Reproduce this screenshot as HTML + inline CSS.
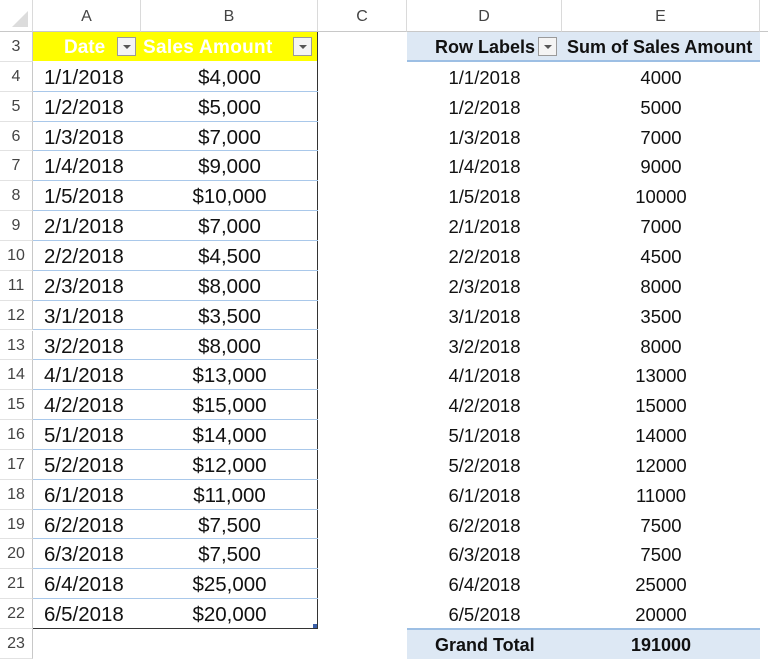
<!DOCTYPE html>
<html><head><meta charset="utf-8"><style>
*{margin:0;padding:0;box-sizing:border-box}
body{width:768px;height:662px;background:#fff;position:relative;overflow:hidden;font-family:"Liberation Sans",sans-serif;color:#111}
.ch{position:absolute;top:0;height:32px;border-right:1px solid #dadada;border-bottom:1px solid #c8c8c8;text-align:center;line-height:34px;font-size:16px;color:#444;background:#fff}
.rn{position:absolute;left:0;width:33px;height:29.85px;border-right:1px solid #c8c8c8;border-bottom:1px solid #e2e2e2;text-align:center;font-size:16px;color:#444;line-height:30px}
.r{position:absolute;height:29.85px;font-size:20.5px;line-height:31px;white-space:nowrap}
.ta{left:33px;width:285px;border-bottom:1px solid #a9c8ea}
.a{position:absolute;left:11px}
.b{position:absolute;left:108px;width:177px;text-align:center}
.pv{left:407px;width:353px;font-size:18.5px}
.d{position:absolute;left:0;width:155px;text-align:center}
.e{position:absolute;left:155px;width:198px;text-align:center}
.dd{display:inline-block;width:19px;height:19px;border:1px solid #9a9a9a;background:#f4f4f4;vertical-align:middle;position:relative}
.dd:after{content:"";position:absolute;left:5px;top:7px;border-left:4px solid transparent;border-right:4px solid transparent;border-top:4px solid #555}
</style></head><body>
<div class="ch" style="left:0;width:33px;background:#fff"><div style="position:absolute;right:4px;bottom:4px;border-left:16px solid transparent;border-bottom:16px solid #dcdcdc"></div></div>
<div class="ch" style="left:33px;width:108px">A</div>
<div class="ch" style="left:141px;width:177px">B</div>
<div class="ch" style="left:318px;width:89px">C</div>
<div class="ch" style="left:407px;width:155px">D</div>
<div class="ch" style="left:562px;width:198px">E</div>
<div class="ch" style="left:760px;width:8px;border-right:none"></div>

<div class="rn" style="top:32px">3</div><div class="rn" style="top:61.85px">4</div><div class="rn" style="top:91.7px">5</div><div class="rn" style="top:121.55px">6</div><div class="rn" style="top:151.4px">7</div><div class="rn" style="top:181.25px">8</div><div class="rn" style="top:211.1px">9</div><div class="rn" style="top:240.95px">10</div><div class="rn" style="top:270.8px">11</div><div class="rn" style="top:300.65px">12</div><div class="rn" style="top:330.5px">13</div><div class="rn" style="top:360.35px">14</div><div class="rn" style="top:390.2px">15</div><div class="rn" style="top:420.05px">16</div><div class="rn" style="top:449.9px">17</div><div class="rn" style="top:479.75px">18</div><div class="rn" style="top:509.6px">19</div><div class="rn" style="top:539.45px">20</div><div class="rn" style="top:569.3px">21</div><div class="rn" style="top:599.15px">22</div><div class="rn" style="top:629px">23</div>

<div class="r" style="left:33px;top:32px;width:285px;height:29px;background:#ffff00;color:#fff;font-weight:bold;font-size:19px;line-height:31px">
<span style="position:absolute;left:31px">Date</span><span class="dd" style="position:absolute;left:84px;top:5px"></span>
<span style="position:absolute;left:110px;letter-spacing:0.3px">Sales Amount</span><span class="dd" style="position:absolute;left:260px;top:5px"></span></div>
<div style="position:absolute;left:317px;top:32px;width:1px;height:597px;background:#333"></div>
<div style="position:absolute;left:33px;top:628px;width:285px;height:1px;background:#333"></div>
<div style="position:absolute;left:313px;top:624px;width:4px;height:4px;background:#3a5fa8"></div>

<div class="r ta" style="top:61.85px"><span class="a">1/1/2018</span><span class="b">$4,000</span></div>
<div class="r ta" style="top:91.7px"><span class="a">1/2/2018</span><span class="b">$5,000</span></div>
<div class="r ta" style="top:121.55px"><span class="a">1/3/2018</span><span class="b">$7,000</span></div>
<div class="r ta" style="top:151.4px"><span class="a">1/4/2018</span><span class="b">$9,000</span></div>
<div class="r ta" style="top:181.25px"><span class="a">1/5/2018</span><span class="b">$10,000</span></div>
<div class="r ta" style="top:211.1px"><span class="a">2/1/2018</span><span class="b">$7,000</span></div>
<div class="r ta" style="top:240.95px"><span class="a">2/2/2018</span><span class="b">$4,500</span></div>
<div class="r ta" style="top:270.8px"><span class="a">2/3/2018</span><span class="b">$8,000</span></div>
<div class="r ta" style="top:300.65px"><span class="a">3/1/2018</span><span class="b">$3,500</span></div>
<div class="r ta" style="top:330.5px"><span class="a">3/2/2018</span><span class="b">$8,000</span></div>
<div class="r ta" style="top:360.35px"><span class="a">4/1/2018</span><span class="b">$13,000</span></div>
<div class="r ta" style="top:390.2px"><span class="a">4/2/2018</span><span class="b">$15,000</span></div>
<div class="r ta" style="top:420.05px"><span class="a">5/1/2018</span><span class="b">$14,000</span></div>
<div class="r ta" style="top:449.9px"><span class="a">5/2/2018</span><span class="b">$12,000</span></div>
<div class="r ta" style="top:479.75px"><span class="a">6/1/2018</span><span class="b">$11,000</span></div>
<div class="r ta" style="top:509.6px"><span class="a">6/2/2018</span><span class="b">$7,500</span></div>
<div class="r ta" style="top:539.45px"><span class="a">6/3/2018</span><span class="b">$7,500</span></div>
<div class="r ta" style="top:569.3px"><span class="a">6/4/2018</span><span class="b">$25,000</span></div>
<div class="r ta" style="top:599.15px;border-bottom:none"><span class="a">6/5/2018</span><span class="b">$20,000</span></div>

<div class="r pv" style="top:32px;height:30px;background:#dde8f4;border-bottom:2px solid #9dbfe4;font-weight:bold;font-size:18px">
<span style="position:absolute;left:28px">Row Labels</span><span class="dd" style="position:absolute;left:131px;top:5px"></span>
<span style="position:absolute;left:160px">Sum of Sales Amount</span></div>
<div class="r pv" style="top:61.85px"><span class="d">1/1/2018</span><span class="e">4000</span></div>
<div class="r pv" style="top:91.7px"><span class="d">1/2/2018</span><span class="e">5000</span></div>
<div class="r pv" style="top:121.55px"><span class="d">1/3/2018</span><span class="e">7000</span></div>
<div class="r pv" style="top:151.4px"><span class="d">1/4/2018</span><span class="e">9000</span></div>
<div class="r pv" style="top:181.25px"><span class="d">1/5/2018</span><span class="e">10000</span></div>
<div class="r pv" style="top:211.1px"><span class="d">2/1/2018</span><span class="e">7000</span></div>
<div class="r pv" style="top:240.95px"><span class="d">2/2/2018</span><span class="e">4500</span></div>
<div class="r pv" style="top:270.8px"><span class="d">2/3/2018</span><span class="e">8000</span></div>
<div class="r pv" style="top:300.65px"><span class="d">3/1/2018</span><span class="e">3500</span></div>
<div class="r pv" style="top:330.5px"><span class="d">3/2/2018</span><span class="e">8000</span></div>
<div class="r pv" style="top:360.35px"><span class="d">4/1/2018</span><span class="e">13000</span></div>
<div class="r pv" style="top:390.2px"><span class="d">4/2/2018</span><span class="e">15000</span></div>
<div class="r pv" style="top:420.05px"><span class="d">5/1/2018</span><span class="e">14000</span></div>
<div class="r pv" style="top:449.9px"><span class="d">5/2/2018</span><span class="e">12000</span></div>
<div class="r pv" style="top:479.75px"><span class="d">6/1/2018</span><span class="e">11000</span></div>
<div class="r pv" style="top:509.6px"><span class="d">6/2/2018</span><span class="e">7500</span></div>
<div class="r pv" style="top:539.45px"><span class="d">6/3/2018</span><span class="e">7500</span></div>
<div class="r pv" style="top:569.3px"><span class="d">6/4/2018</span><span class="e">25000</span></div>
<div class="r pv" style="top:599.15px"><span class="d">6/5/2018</span><span class="e">20000</span></div>
<div class="r pv" style="top:628px;height:31px;background:#dde8f4;border-top:2px solid #9dbfe4;font-weight:bold;font-size:18px;line-height:30px">
<span style="position:absolute;left:28px">Grand Total</span><span class="e">191000</span></div>
</body></html>
